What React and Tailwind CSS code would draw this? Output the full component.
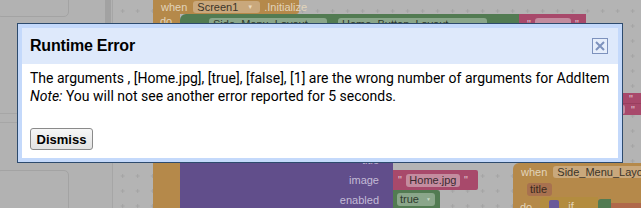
import React from "react";

function Workspace() {
  return (
    <svg className="absolute left-[114px] top-0" width="527" height="208">
      <defs>
        <pattern id="grid" x="-114" y="0" width="15" height="15" patternUnits="userSpaceOnUse">
          <path d="M0.7 11 H4.7 M2.7 9 V13" stroke="#a4a4a4" strokeWidth="1" fill="none" />
        </pattern>
      </defs>
      <rect x="0" y="0" width="527" height="208" fill="url(#grid)" />
    </svg>
  );
}

function Quote({ className = "" }) {
  return <span className={"text-[11px] leading-[10px] text-[#e0c3ce] " + className}>"</span>;
}

export default function App() {
  const f = { fontFamily: '"Liberation Sans", Arial, sans-serif' };
  return (
    <div className="relative w-[641px] h-[208px] overflow-hidden bg-[#b4b4b4]" style={f}>
      {/* left palette panel */}
      <div className="absolute left-0 top-0 w-[113px] h-[208px] bg-[#b2b2b2] border-r border-[#a6a6a6]">
        <div className="absolute left-[-4px] top-[-6px] w-[73px] h-[23px] rounded-[5px] border border-[#a3a3a3]" />
        <div className="absolute left-[-4px] top-[170px] w-[73px] h-[50px] rounded-[5px] border border-[#a3a3a3]" />
        <div className="absolute left-0 top-[113px] w-[17px] border-t border-[#a6a6a6]" />
        <div className="absolute left-0 top-[122px] w-[17px] border-t border-[#a6a6a6]" />
        <div className="absolute left-[105px] top-0 w-[6px] h-[30px] bg-[#a2a2a2]" />
      </div>
      <Workspace />

      {/* top: when Screen1.Initialize */}
      <div className="absolute left-[153px] top-0 flex flex-col text-[11px] text-[#e2d4bb]">
        <div className="h-[14px] w-[146px] bg-[#b5894a] rounded-br-[3px] flex items-center pl-[8px] gap-[6px]">
          <span>when</span>
          <span className="h-[12px] pl-[4px] pr-[7px] rounded-[3px] bg-[#c9a87c] text-[#3b3429] flex items-center">
            Screen1<span className="ml-[9px] text-[6px] text-[#ecdcc0]">▼</span>
          </span>
          <span className="-ml-[2px]">.Initialize</span>
        </div>
        <div className="flex">
          <div className="w-[27px] h-[22px] bg-[#b5894a] pl-[7px] leading-[14px]">do</div>
          <div className="h-[16px] w-[339px] bg-[#527b52] rounded-tl-[6px] flex items-end gap-[11px] pl-[29px] text-[#2e3a2e]">
            <div className="w-[118px] h-[12px] rounded-[3px] bg-[#8aa68a] pl-[4px] leading-[13px]">Side_Menu_Layout</div>
            <div className="w-[149px] h-[12px] rounded-[3px] bg-[#8aa68a] pl-[4px] leading-[13px]">Home_Button_Layout</div>
          </div>
          <div className="h-[16px] w-[67px] bg-[#a8496b] flex items-end gap-[4px] pl-[8px]">
            <Quote className="mb-[1px]" />
            <div className="w-[36px] h-[12px] rounded-[3px] bg-[#c28c9f]" />
            <Quote className="mb-[1px]" />
          </div>
        </div>
      </div>

      {/* right edge pink strings */}
      <div className="absolute left-[622px] top-[93px] flex flex-col">
        <div className="w-[19px] h-[11px] bg-[#a8496b] border-b border-[#9a3f5f] pl-[7px] pt-[1px] flex items-start"><Quote /></div>
        <div className="w-[19px] h-[11px] bg-[#a8496b] flex items-start">
          <div className="mt-[1px] w-[3px] h-[9px] rounded-r-[2px] bg-[#c28c9f]" />
          <span className="ml-[6px] pt-[1px] flex"><Quote /></span>
        </div>
      </div>

      {/* bottom: AddItem arguments */}
      <div className="absolute left-[153px] top-[150px] flex text-[11px]">
        <div className="w-[27px] h-[60px] bg-[#b5894a]" />
        <div className="w-[213px] h-[60px] bg-[#614e8b] flex flex-col items-end pr-[14px] text-[#c3bbd6] leading-[20px]">
          <div>title</div>
          <div>image</div>
          <div>enabled</div>
        </div>
        <div className="flex flex-col pt-[20px]">
          <div className="w-[85px] h-[20px] bg-[#a8496b] rounded-r-[2px] flex items-center gap-[4px] pl-[5px]">
            <Quote />
            <div className="w-[54px] h-[13px] rounded-[3px] bg-[#c48c9f] text-[#3a2a30] flex items-center justify-center">Home.jpg</div>
            <Quote />
          </div>
          <div className="w-[47px] h-[20px] bg-[#527b52] rounded-tr-[3px] pl-[4px] pt-[3px]">
            <div className="w-[38px] h-[13px] rounded-[3px] bg-[#8aa68a] text-[#2e3a2e] pl-[3px] flex items-center">
              true<span className="ml-[7px] text-[5px] text-[#c8d8c8]">▼</span>
            </div>
          </div>
        </div>
      </div>

      {/* right bottom orange event */}
      <div className="absolute left-[513px] top-[163px] w-[140px] h-[50px] bg-[#b5894a] rounded-tl-[6px] text-[11px] text-[#e2d4bb] flex flex-col">
        <div className="flex items-center h-[16px] pl-[8px] pt-[2px] gap-[6px]">
          <span>when</span>
          <div className="h-[12px] w-[100px] rounded-[3px] bg-[#c9a87c] text-[#3b3429] pl-[4px] leading-[12px]">Side_Menu_Layout</div>
        </div>
        <div className="pl-[14px] pt-[4px]">
          <div className="w-[25px] h-[13px] rounded-[3px] bg-[#a8714f] text-[#3b2a20] pl-[3px] leading-[13px]">title</div>
        </div>
        <div className="flex items-start pt-[1px]">
          <span className="pl-[7px] pt-[4px] leading-[12px]">do</span>
          <div className="ml-[8px] w-[58px] h-[20px] rounded-tl-[5px] bg-[#b38c3f] flex items-start pl-[9px] pt-[3px] gap-[9px]">
            <div className="w-[10px] h-[10px] rounded-[2px] bg-[#6a5a9a]" />
            <span className="leading-[12px]">if</span>
          </div>
          <div className="mt-[2px] w-[13px] h-[20px] bg-[#527b52] rounded-tl-[3px]" />
          <div className="mt-[6px] w-[40px] h-[20px] bg-[#b0684a]" />
        </div>
      </div>

      {/* dialog */}
      <div className="absolute left-[17px] top-[23px] w-[606px] h-[140px] border border-[#2d4b6e] bg-[#c4d9fb] p-[4px] flex flex-col">
        <div className="h-[36px] bg-[#dee9fb] flex items-center justify-between pl-[8px] pr-[10px]">
          <span className="text-[16px] font-bold text-black tracking-[-0.2px]">Runtime Error</span>
          <div className="w-[16px] h-[16px] border border-[#7d92bd] bg-[#e6eefb] flex items-center justify-center">
            <svg width="10" height="10" viewBox="0 0 10 10">
              <path d="M1 1 L9 9 M9 1 L1 9" stroke="#7d92bd" strokeWidth="2" />
            </svg>
          </div>
        </div>
        <div className="flex-1 bg-white pl-[8px] pt-[5px]">
          <div className="text-[14px] leading-[18px] text-black" style={{ fontFamily: 'Roboto, "Liberation Sans", sans-serif' }}>
            <div>The arguments , [Home.jpg], [true], [false], [1] are the wrong number of arguments for AddItem</div>
            <div><i>Note:</i> You will not see another error reported for 5 seconds.</div>
          </div>
          <button className="mt-[23px] h-[22px] w-[63px] rounded-[3px] border border-[#8a8a8a] bg-[linear-gradient(#f6f6f6,#e2e2e2)] text-[13px] font-bold text-black leading-none">
            Dismiss
          </button>
        </div>
      </div>
    </div>
  );
}
